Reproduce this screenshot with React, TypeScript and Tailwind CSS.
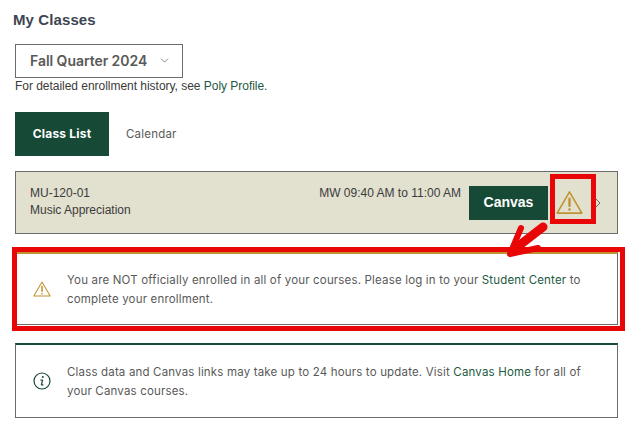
import { ChevronDown, ChevronRight } from "lucide-react";

const helvetica = "font-['Liberation_Sans',Arial,sans-serif]";
const inter = "font-['Inter',sans-serif]";

const WarningIcon = ({ className }: { className: string }) => (
  <svg viewBox="0 0 28 25" fill="none" stroke="#c0922f" className={className}>
    <path d="M14 1.5 L26.8 23.5 H1.2 Z" strokeWidth="1.6" strokeLinejoin="round" />
    <path d="M14 8.5 V16" strokeWidth="2.4" strokeLinecap="round" />
    <circle cx="14" cy="19.8" r="1.3" fill="#c0922f" stroke="none" />
  </svg>
);

const InfoIcon = () => (
  <svg viewBox="0 0 18 18" fill="none" className="h-[18px] w-[18px] shrink-0">
    <circle cx="9" cy="9" r="8" stroke="#174a36" strokeWidth="1.2" />
    <circle cx="9.8" cy="5" r="1" fill="#174a36" />
    <path d="M7.8 8 H9.6 L8.4 12.8 H10" stroke="#174a36" strokeWidth="1.2" strokeLinecap="round" strokeLinejoin="round" />
  </svg>
);

const App = () => {
  return (
    <div className="relative h-[428px] w-[632px] overflow-hidden bg-white">
      <div className="pl-[15px] pr-[14px]">
        <h1 className={`${helvetica} -ml-[2px] pt-[10px] text-[15px] leading-[20px] font-bold tracking-[0.1px] text-[#3e4651]`}>
          My Classes
        </h1>

        <div className={`${inter} mt-[14px] flex h-[34px] w-[168px] items-center justify-between border border-[#6b6b6b] pl-[14px] pr-[11px] text-[14px] font-semibold tracking-[-0.05px] text-[#595959]`}>
          <span className="-mt-[2px]">Fall Quarter 2024</span>
          <ChevronDown className="-mt-[2px] h-[13px] w-[13px] text-[#595959]" strokeWidth={1.3} />
        </div>
        <p className={`${helvetica} mt-[1px] text-[12px] leading-[15px] tracking-[-0.03px] text-[#3b3b3b]`}>
          For detailed enrollment history, see <span className="text-[#1c5a41]">Poly Profile.</span>
        </p>

        <div className={`${inter} mt-[18px] flex items-center text-[11.5px]`}>
          <div className="flex h-[44px] w-[94px] items-center justify-center bg-[#174a36] text-[12px] font-bold tracking-[0.2px] text-white">
            Class List
          </div>
          <div className="ml-[17px] pt-[2px] tracking-[0.2px] text-[#595959]">Calendar</div>
        </div>

        <div className={`${helvetica} mt-[15px] flex h-[63px] items-center border border-[#6b6b6b] bg-[#e2e0cf] pl-[14px] pr-[11px] text-[12px] text-[#3b3b3b]`}>
          <div className="flex-1 leading-[17px]">
            <div className="-mt-[1px]">MU-120-01</div>
            <div>Music Appreciation</div>
          </div>
          <div className="-mt-[20px]">MW 09:40 AM to 11:00 AM</div>
          <div className="ml-[8px] flex h-[34px] w-[79px] items-center justify-center bg-[#174a36] text-[14px] font-bold text-white">
            Canvas
          </div>
          <WarningIcon className="ml-[8px] h-[25px] w-[27px] shrink-0" />
          <ChevronRight className="ml-[7px] h-[16px] w-[16px] text-[#6b6b6b]" strokeWidth={1.5} />
        </div>

        <div className={`${inter} mt-[18px] flex h-[73px] items-center gap-[16px] border border-t-2 border-[#6b6b6b] border-t-[#c0922f] pl-[17px] pr-[24px] text-[11.5px] leading-[19px] tracking-[0.17px] text-[#595959]`}>
          <WarningIcon className="h-[16px] w-[18px] shrink-0" />
          <p className="pt-[1px]">
            You are NOT officially enrolled in all of your courses. Please log in to your{" "}
            <span className="text-[#1c5a41]">Student Center</span> to complete your enrollment.
          </p>
        </div>

        <div className={`${inter} mt-[18px] flex h-[75px] items-center gap-[16px] border border-t-2 border-[#6b6b6b] border-t-[#174a36] pl-[17px] pr-[24px] text-[11.5px] leading-[19px] tracking-[0.17px] text-[#595959]`}>
          <InfoIcon />
          <p className="pt-[1px]">
            Class data and Canvas links may take up to 24 hours to update. Visit{" "}
            <span className="text-[#1c5a41]">Canvas Home</span> for all of your Canvas courses.
          </p>
        </div>
      </div>

      {/* red annotations drawn over the screenshot */}
      <div className="absolute left-[550px] top-[174px] h-[50px] w-[46px] border-[5px] border-[#e80606]" />
      <div className="absolute left-[12px] top-[247px] h-[84px] w-[613px] border-[5px] border-[#e80606]" />
      <svg viewBox="0 0 60 40" className="absolute left-[500px] top-[218px] h-[40px] w-[60px]" fill="none" stroke="#e80606" strokeLinecap="round" strokeLinejoin="round">
        <path d="M43 9 L12 33" strokeWidth="9" />
        <path d="M21 10 L10 36 L38 30" strokeWidth="6" />
      </svg>
    </div>
  );
};

export default App;
